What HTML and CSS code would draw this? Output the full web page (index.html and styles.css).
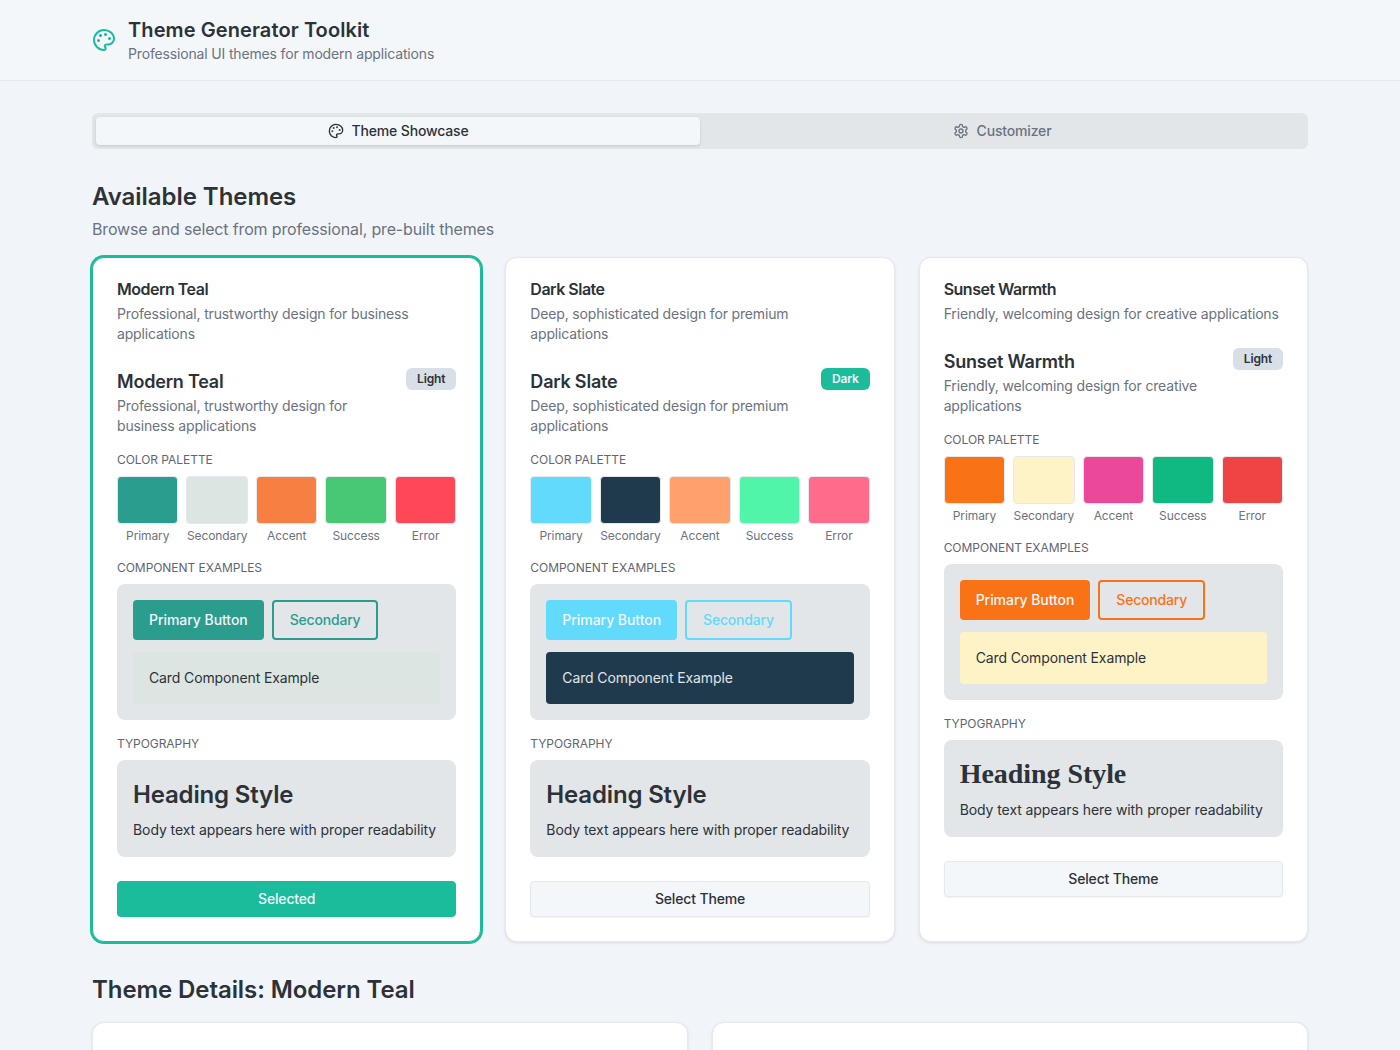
FILE: index.html
```html
<!DOCTYPE html>
<html lang="en">
<head>
<meta charset="utf-8">
<title>Theme Generator Toolkit</title>
<link rel="stylesheet" href="styles.css">
</head>
<body>
<header class="site-header">
  <div class="brand">
    <svg class="brand-icon" viewBox="0 0 24 24"><circle cx="13.5" cy="6.5" r=".5" fill="currentColor"/><circle cx="17.5" cy="10.5" r=".5" fill="currentColor"/><circle cx="8.5" cy="7.5" r=".5" fill="currentColor"/><circle cx="6.5" cy="12.5" r=".5" fill="currentColor"/><path d="M12 2C6.5 2 2 6.5 2 12s4.5 10 10 10c.926 0 1.648-.746 1.648-1.688 0-.437-.18-.835-.437-1.125-.29-.289-.438-.652-.438-1.125a1.64 1.64 0 0 1 1.668-1.668h1.996c3.051 0 5.555-2.503 5.555-5.554C21.965 6.012 17.461 2 12 2z"/></svg>
    <div>
      <h1 class="brand-title">Theme Generator Toolkit</h1>
      <p class="brand-sub">Professional UI themes for modern applications</p>
    </div>
  </div>
</header>
<main class="page">
  <nav class="tabs">
    <div class="tab tab-active">
      <svg class="tab-icon" viewBox="0 0 24 24"><circle cx="13.5" cy="6.5" r=".5" fill="currentColor"/><circle cx="17.5" cy="10.5" r=".5" fill="currentColor"/><circle cx="8.5" cy="7.5" r=".5" fill="currentColor"/><circle cx="6.5" cy="12.5" r=".5" fill="currentColor"/><path d="M12 2C6.5 2 2 6.5 2 12s4.5 10 10 10c.926 0 1.648-.746 1.648-1.688 0-.437-.18-.835-.437-1.125-.29-.289-.438-.652-.438-1.125a1.64 1.64 0 0 1 1.668-1.668h1.996c3.051 0 5.555-2.503 5.555-5.554C21.965 6.012 17.461 2 12 2z"/></svg>
      <span>Theme Showcase</span>
    </div>
    <div class="tab">
      <svg class="tab-icon" viewBox="0 0 24 24"><path d="M12.22 2h-.44a2 2 0 0 0-2 2v.18a2 2 0 0 1-1 1.73l-.43.25a2 2 0 0 1-2 0l-.15-.08a2 2 0 0 0-2.73.73l-.22.38a2 2 0 0 0 .73 2.73l.15.1a2 2 0 0 1 1 1.72v.51a2 2 0 0 1-1 1.74l-.15.09a2 2 0 0 0-.73 2.73l.22.38a2 2 0 0 0 2.73.73l.15-.08a2 2 0 0 1 2 0l.43.25a2 2 0 0 1 1 1.73V20a2 2 0 0 0 2 2h.44a2 2 0 0 0 2-2v-.18a2 2 0 0 1 1-1.73l.43-.25a2 2 0 0 1 2 0l.15.08a2 2 0 0 0 2.73-.73l.22-.39a2 2 0 0 0-.73-2.73l-.15-.08a2 2 0 0 1-1-1.74v-.5a2 2 0 0 1 1-1.74l.15-.09a2 2 0 0 0 .73-2.73l-.22-.38a2 2 0 0 0-2.73-.73l-.15.08a2 2 0 0 1-2 0l-.43-.25a2 2 0 0 1-1-1.73V4a2 2 0 0 0-2-2z"/><circle cx="12" cy="12" r="3"/></svg>
      <span>Customizer</span>
    </div>
  </nav>

  <h2 class="section-title">Available Themes</h2>
  <p class="section-sub">Browse and select from professional, pre-built themes</p>

  <section class="theme-grid">
    <article class="card card-selected teal">
      <h3 class="card-title">Modern Teal</h3>
      <p class="card-desc">Professional, trustworthy design for business applications</p>
      <div class="preview-head">
        <div class="preview-text">
          <h4 class="preview-title">Modern Teal</h4>
          <p class="preview-desc">Professional, trustworthy design for business applications</p>
        </div>
        <span class="badge badge-light">Light</span>
      </div>
      <div class="label">COLOR PALETTE</div>
      <div class="palette">
        <div class="swatch-item"><div class="swatch s1"></div><span>Primary</span></div>
        <div class="swatch-item"><div class="swatch s2"></div><span>Secondary</span></div>
        <div class="swatch-item"><div class="swatch s3"></div><span>Accent</span></div>
        <div class="swatch-item"><div class="swatch s4"></div><span>Success</span></div>
        <div class="swatch-item"><div class="swatch s5"></div><span>Error</span></div>
      </div>
      <div class="label">COMPONENT EXAMPLES</div>
      <div class="demo-box">
        <div class="demo-buttons"><span class="btn btn-primary">Primary Button</span><span class="btn btn-outline">Secondary</span></div>
        <div class="demo-card">Card Component Example</div>
      </div>
      <div class="label">TYPOGRAPHY</div>
      <div class="type-box">
        <div class="type-heading">Heading Style</div>
        <p class="type-body">Body text appears here with proper readability</p>
      </div>
      <div class="select-btn select-on">Selected</div>
    </article>

    <article class="card slate">
      <h3 class="card-title">Dark Slate</h3>
      <p class="card-desc">Deep, sophisticated design for premium applications</p>
      <div class="preview-head">
        <div class="preview-text">
          <h4 class="preview-title">Dark Slate</h4>
          <p class="preview-desc">Deep, sophisticated design for premium applications</p>
        </div>
        <span class="badge badge-dark">Dark</span>
      </div>
      <div class="label">COLOR PALETTE</div>
      <div class="palette">
        <div class="swatch-item"><div class="swatch s1"></div><span>Primary</span></div>
        <div class="swatch-item"><div class="swatch s2"></div><span>Secondary</span></div>
        <div class="swatch-item"><div class="swatch s3"></div><span>Accent</span></div>
        <div class="swatch-item"><div class="swatch s4"></div><span>Success</span></div>
        <div class="swatch-item"><div class="swatch s5"></div><span>Error</span></div>
      </div>
      <div class="label">COMPONENT EXAMPLES</div>
      <div class="demo-box">
        <div class="demo-buttons"><span class="btn btn-primary">Primary Button</span><span class="btn btn-outline">Secondary</span></div>
        <div class="demo-card">Card Component Example</div>
      </div>
      <div class="label">TYPOGRAPHY</div>
      <div class="type-box">
        <div class="type-heading">Heading Style</div>
        <p class="type-body">Body text appears here with proper readability</p>
      </div>
      <div class="select-btn">Select Theme</div>
    </article>

    <article class="card sunset">
      <h3 class="card-title">Sunset Warmth</h3>
      <p class="card-desc">Friendly, welcoming design for creative applications</p>
      <div class="preview-head">
        <div class="preview-text">
          <h4 class="preview-title">Sunset Warmth</h4>
          <p class="preview-desc">Friendly, welcoming design for creative applications</p>
        </div>
        <span class="badge badge-light">Light</span>
      </div>
      <div class="label">COLOR PALETTE</div>
      <div class="palette">
        <div class="swatch-item"><div class="swatch s1"></div><span>Primary</span></div>
        <div class="swatch-item"><div class="swatch s2"></div><span>Secondary</span></div>
        <div class="swatch-item"><div class="swatch s3"></div><span>Accent</span></div>
        <div class="swatch-item"><div class="swatch s4"></div><span>Success</span></div>
        <div class="swatch-item"><div class="swatch s5"></div><span>Error</span></div>
      </div>
      <div class="label">COMPONENT EXAMPLES</div>
      <div class="demo-box">
        <div class="demo-buttons"><span class="btn btn-primary">Primary Button</span><span class="btn btn-outline">Secondary</span></div>
        <div class="demo-card">Card Component Example</div>
      </div>
      <div class="label">TYPOGRAPHY</div>
      <div class="type-box">
        <div class="type-heading">Heading Style</div>
        <p class="type-body">Body text appears here with proper readability</p>
      </div>
      <div class="select-btn">Select Theme</div>
    </article>
  </section>

  <h2 class="details-title">Theme Details: Modern Teal</h2>
  <section class="details-grid">
    <div class="detail-card"></div>
    <div class="detail-card"></div>
  </section>
</main>
</body>
</html>
```
FILE: styles.css
```css
* { box-sizing: border-box; margin: 0; padding: 0; }
html, body { background: #f1f5f9; }
body {
  font-family: Inter, "Liberation Sans", sans-serif;
  color: #2c3238;
  font-size: 14px;
  letter-spacing: -0.16px;
}
.site-header {
  height: 81px;
  border-bottom: 1px solid #e5e8ec;
  background: #f4f7fa;
  padding: 0 92px;
  display: flex;
  align-items: center;
}
.brand { display: flex; align-items: center; gap: 12px; }
.brand-icon { width: 24px; height: 24px; fill: none; stroke: #1abc9c; stroke-width: 2; stroke-linecap: round; stroke-linejoin: round; }
.brand-title { font-size: 20px; line-height: 28px; font-weight: 600; letter-spacing: 0.1px; }
.brand-sub { font-size: 14px; line-height: 20px; color: #6b7280; }
.page { padding: 32px 92px 40px; }
.tabs {
  display: grid;
  grid-template-columns: 1fr 1fr;
  height: 36px;
  padding: 4px;
  background: #e2e6e9;
  border-radius: 6px;
}
.tab {
  display: flex;
  align-items: center;
  justify-content: center;
  gap: 8px;
  padding-bottom: 1px;
  font-size: 14px;
  font-weight: 500;
  color: #6b7280;
  border-radius: 4px;
}
.tab-active { background: #f4f7fa; color: #2c3238; box-shadow: 0 1px 3px rgba(0,0,0,.14); }
.tab-icon { width: 16px; height: 16px; fill: none; stroke: currentColor; stroke-width: 2; stroke-linecap: round; stroke-linejoin: round; }
.section-title { margin-top: 32px; font-size: 24px; line-height: 32px; font-weight: 600; letter-spacing: -0.05px; }
.section-sub { margin-top: 4px; font-size: 16px; line-height: 24px; color: #6b7280; letter-spacing: -0.15px; }
.theme-grid { margin-top: 16px; display: grid; grid-template-columns: repeat(3, 1fr); gap: 24px; }
.card {
  background: #fff;
  border: 1px solid #e5e8ec;
  border-radius: 12px;
  padding: 24px;
  box-shadow: 0 1px 3px rgba(0,0,0,.1);
}
.card-selected { border-color: #1abc9c; box-shadow: 0 0 0 2px #1abc9c; }
.card-title { font-size: 16px; line-height: 14px; font-weight: 600; letter-spacing: -0.5px; }
.card-desc { margin-top: 8px; line-height: 20px; color: #6b7280; }
.preview-head { margin-top: 24px; display: flex; justify-content: space-between; align-items: flex-start; gap: 16px; }
.preview-text { flex: 1; }
.preview-title { font-size: 18px; line-height: 28px; font-weight: 600; letter-spacing: -0.2px; }
.preview-desc { line-height: 20px; color: #6b7280; }
.badge {
  flex: none;
  font-size: 12px;
  line-height: 16px;
  font-weight: 600;
  padding: 3px 11px;
  border-radius: 6px;
}
.badge-light { background: #d9dfe7; color: #2c3238; }
.badge-dark { background: #1abc9c; color: #f3f6fa; }
.label { margin-top: 16px; font-size: 12px; line-height: 16px; font-weight: 400; color: #5f6670; letter-spacing: -0.05px; }
.palette { margin-top: 8px; display: grid; grid-template-columns: repeat(5, 1fr); gap: 8px; }
.swatch-item { text-align: center; font-size: 12px; line-height: 16px; color: #6b7280; letter-spacing: -0.1px; }
.swatch { height: 48px; border-radius: 4px; border: 1px solid #e5e8ec; margin-bottom: 4px; }
.demo-box, .type-box { margin-top: 8px; background: #e2e6e9; border-radius: 8px; }
.demo-box { padding: 16px; }
.type-box { padding: 17px 16px; }
.demo-buttons { display: flex; gap: 8px; }
.btn {
  display: inline-flex;
  align-items: center;
  height: 40px;
  padding: 0 16px 2px;
  border-radius: 4px;
  font-weight: 500;
}
.btn-primary { letter-spacing: -0.05px; }
.btn-outline { border: 2px solid; background: transparent; letter-spacing: -0.2px; }
.demo-card { margin-top: 12px; height: 52px; padding: 0 16px 2px; display: flex; align-items: center; border-radius: 4px; letter-spacing: -0.12px; }
.type-heading { font-size: 24px; line-height: 36px; font-weight: 600; }
.type-body { margin-top: 7px; line-height: 20px; color: #2c3238; letter-spacing: -0.08px; }
.select-btn {
  margin-top: 24px;
  height: 36px;
  padding-bottom: 2px;
  display: flex;
  align-items: center;
  justify-content: center;
  font-weight: 500;
  border: 1px solid #e5e8ec;
  border-radius: 4px;
  background: #f4f7fa;
  box-shadow: 0 1px 2px rgba(0,0,0,.05);
}
.select-on { background: #1abc9c; border-color: #1abc9c; color: #f3f6fa; }

.teal .s1, .teal .btn-primary { background: #2a9d8f; }
.teal .s2, .teal .demo-card { background: #dde5e2; }
.teal .s3 { background: #f77f42; }
.teal .s4 { background: #48c774; }
.teal .s5 { background: #ff4757; }
.teal .btn-primary { color: #f3f6fa; }
.teal .btn-outline { color: #2a9d8f; border-color: #2a9d8f; }

.slate .s1, .slate .btn-primary { background: #61dafb; }
.slate .s2, .slate .demo-card { background: #1f3a4d; }
.slate .s3 { background: #ffa06d; }
.slate .s4 { background: #50f5a9; }
.slate .s5 { background: #ff6b8b; }
.slate .btn-primary { color: #f3f6fa; }
.slate .btn-outline { color: #61dafb; border-color: #61dafb; }
.slate .demo-card { color: #e1e5e9; }

.sunset .s1, .sunset .btn-primary { background: #f97316; }
.sunset .s2, .sunset .demo-card { background: #fef3c7; }
.sunset .s3 { background: #ec4899; }
.sunset .s4 { background: #10b981; }
.sunset .s5 { background: #ef4444; }
.sunset .btn-primary { color: #f3f6fa; }
.sunset .btn-outline { color: #f97316; border-color: #f97316; }
.sunset .type-heading { font-family: "Liberation Serif", serif; font-size: 28px; line-height: 33px; font-weight: 700; letter-spacing: -0.05px; }
.sunset .type-body { margin-top: 10px; }

.details-title { margin-top: 32px; font-size: 24px; line-height: 32px; font-weight: 600; letter-spacing: -0.08px; }
.details-grid { margin-top: 16px; display: grid; grid-template-columns: 1fr 1fr; gap: 24px; }
.detail-card { height: 240px; background: #fff; border: 1px solid #e5e8ec; border-radius: 12px; box-shadow: 0 1px 3px rgba(0,0,0,.1); }
```
